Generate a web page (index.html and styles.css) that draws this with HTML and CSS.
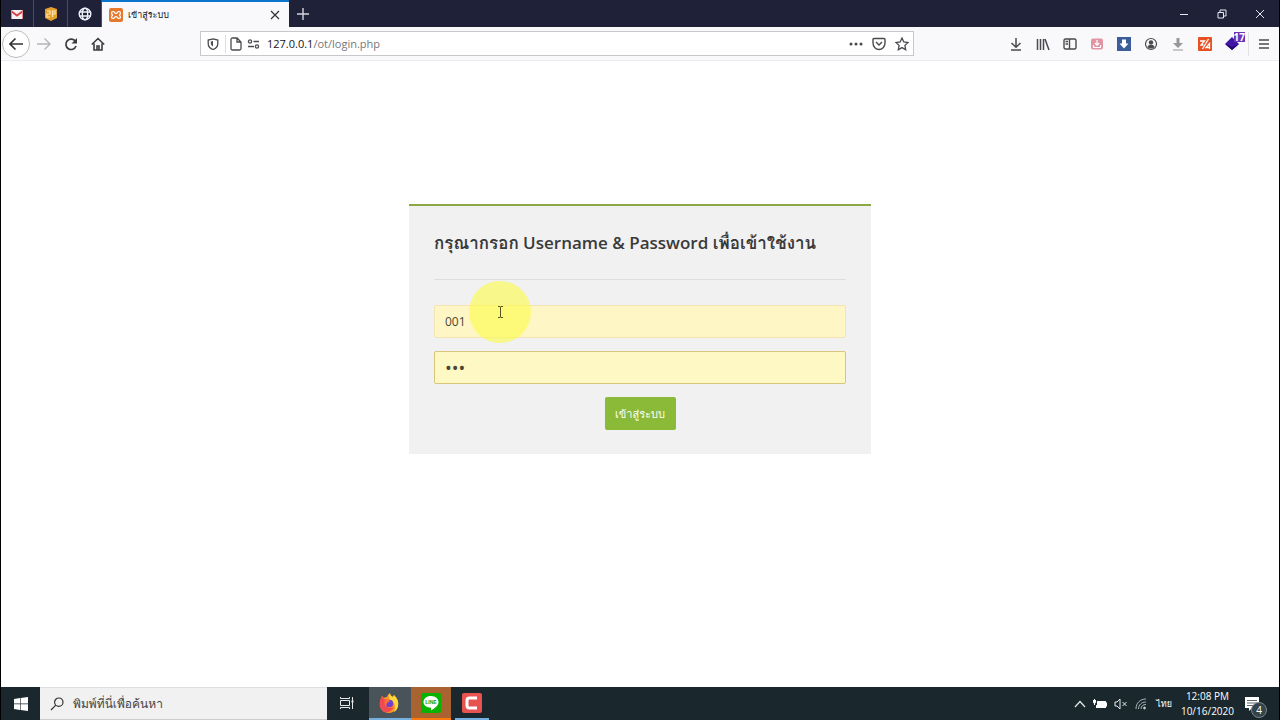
FILE: index.html
```html
<!DOCTYPE html>
<html lang="th">

<head>
    <meta charset="UTF-8">
    <meta name="viewport" content="width=device-width, initial-scale=1.0">
    <title>เข้าสู่ระบบ</title>
    <link rel="stylesheet" href="styles.css">
</head>

<body>
    <header class="browser">
        <div class="tabs">
            <button class="pin" aria-label="Gmail">
                <svg width="12" height="12" viewBox="0 0 12 12"><path fill="#f4f0f2" d="M0 2h12v9H0z"/><path fill="none" stroke="#d8434a" stroke-width="2" d="M0 3l6 4.500L12 3"/><path fill="none" stroke="#e0868b" d="M.5 2v9M11.500 2v9"/></svg>
            </button>
            <button class="pin" aria-label="phpMyAdmin">
                <svg width="14" height="14" viewBox="0 0 14 14"><path fill="#e5a02c" d="M1 2l6-2 6 2v9l-6 3-6-3z"/><path fill="none" stroke="#fbe5b0" stroke-width="1.2" d="M3 4h3v3H3v3h3M8.500 10V4H11v3H8.500"/></svg>
            </button>
            <button class="pin" aria-label="Web">
                <svg width="14" height="14" viewBox="0 0 14 14" fill="none" stroke="#eef0fa" stroke-width="1.4"><circle cx="7" cy="7" r="5.8"/><ellipse cx="7" cy="7" rx="2.7" ry="5.8"/><path d="M1 5h12M1 9h12"/></svg>
            </button>
            <div class="tab">
                <svg width="14" height="14" viewBox="0 0 14 14"><rect width="14" height="14" rx="2" fill="#e57a2e"/><path d="M4 3.5C2 3.5 2.5 6 3.5 7 2.500 8 2 10.500 4 10.500c2 0 1.500-2 3-2s1 2 3 2 1.500-2.500.5-3.500c1-1 1.500-3.500-.5-3.500s-1.500 2-3 2-1-2-3-2z" fill="none" stroke="#fff" stroke-width="1.2"/></svg>
                <span class="tab-title">เข้าสู่ระบบ</span>
                <button class="tab-close" aria-label="Close tab">
                    <svg width="10" height="10" viewBox="0 0 10 10"><path d="M1 1l8 8M9 1L1 9" stroke="#333" stroke-width="1.2"/></svg>
                </button>
            </div>
            <button class="new-tab" aria-label="New tab">
                <svg width="12" height="12" viewBox="0 0 12 12"><path d="M6 0v12M0 6h12" stroke="#d4d5df" stroke-width="1.4"/></svg>
            </button>
            <div class="window-buttons">
                <button aria-label="Minimize"><svg width="10" height="10" viewBox="0 0 10 10"><path d="M1 5.500h8" stroke="#e8e8ee"/></svg></button>
                <button aria-label="Restore"><svg width="10" height="10" viewBox="0 0 10 10" fill="none" stroke="#e8e8ee"><path d="M1 3.500h5.500V9H1zM3 3V1h6v6H7"/></svg></button>
                <button aria-label="Close"><svg width="10" height="10" viewBox="0 0 10 10"><path d="M1 1l8 8M9 1L1 9" stroke="#e8e8ee"/></svg></button>
            </div>
        </div>

        <div class="toolbar">
            <div class="nav">
                <button class="back" aria-label="Back"><svg width="14" height="14" viewBox="0 0 14 14" fill="none" stroke="#333" stroke-width="1.600"><path d="M14 7H1M6.500 1.500L1 7l5.500 5.500"/></svg></button>
                <button aria-label="Forward"><svg width="14" height="14" viewBox="0 0 14 14" fill="none" stroke="#b5b5b8" stroke-width="1.400"><path d="M0 7h13M7.500 1.500L13 7l-5.500 5.500"/></svg></button>
                <button aria-label="Reload"><svg width="14" height="14" viewBox="0 0 14 14" fill="none" stroke="#3c3c40" stroke-width="1.700"><path d="M11.500 4.500A5.200 5.200 0 1 0 12 9"/><path d="M13 1v5.500H7.500z" fill="#3c3c40" stroke="none"/></svg></button>
                <button aria-label="Home"><svg width="14" height="14" viewBox="0 0 14 14" fill="none" stroke="#3c3c40" stroke-width="1.600"><path d="M.8 7.500L7 1.500l6.200 6M3 6.500V13h8V6.500M6 13V9h2v4"/></svg></button>
            </div>
            <div class="address">
                <svg width="12" height="12" viewBox="0 0 12 12" fill="none" stroke="#4a4a4f" stroke-width="1.300"><path d="M6 .8l4.800 1.200v3.500c0 3-2 5-4.800 6-2.800-1-4.800-3-4.800-6V2z"/><path d="M6 3v5.500C4.500 7.500 3.800 6.500 3.800 5V3.500z" fill="#4a4a4f" stroke="none"/></svg>
                <span class="line"></span>
                <svg width="12" height="14" viewBox="0 0 12 14" fill="none" stroke="#4a4a4f" stroke-width="1.300"><path d="M2.500 1H7l4 4v6.500c0 1-.5 1.500-1.500 1.500h-7C1.500 13 1 12.500 1 11.500v-9C1 1.500 1.500 1 2.500 1zM7 1v4h4"/></svg>
                <svg class="perm" width="13" height="10" viewBox="0 0 13 10" fill="none" stroke="#4a4a4f" stroke-width="1.300"><circle cx="3" cy="2.500" r="1.600"/><circle cx="10" cy="7.500" r="1.600"/><path d="M6.500 2.500H12M1 7.500h6"/></svg>
                <a class="url" href="#"><b>127.0.0.1</b>/ot/login.php</a>
                <button aria-label="Page actions"><svg width="14" height="14" viewBox="0 0 14 14" fill="#4a4a4f"><circle cx="2" cy="7" r="1.500"/><circle cx="7" cy="7" r="1.500"/><circle cx="12" cy="7" r="1.500"/></svg></button>
                <button aria-label="Save to Pocket"><svg width="14" height="14" viewBox="0 0 14 14" fill="none" stroke="#4a4a4f" stroke-width="1.400"><path d="M2 1.500h10c.7 0 1 .3 1 1V6c0 4-3 6.500-6 6.500S1 10 1 6V2.500c0-.7.3-1 1-1zM4 5l3 3 3-3"/></svg></button>
                <button aria-label="Bookmark"><svg width="14" height="14" viewBox="0 0 14 14" fill="none" stroke="#4a4a4f" stroke-width="1.300"><path d="M7 1l1.800 4 4.200.5-3.100 2.900.8 4.300L7 10.600l-3.700 2.100.8-4.300L1 5.500 5.200 5z"/></svg></button>
            </div>
            <div class="tools">
                <button aria-label="Downloads"><svg width="14" height="14" viewBox="0 0 14 14" fill="none" stroke="#4a4a4f" stroke-width="1.500"><path d="M7 1v9M2.500 6L7 10.300 11.500 6M2 13h10"/></svg></button>
                <button aria-label="Library"><svg width="14" height="14" viewBox="0 0 14 14" stroke="#4a4a4f" stroke-width="1.500"><path d="M1.500 2v11M4.500 2v11M7.500 2v11M9 2l4 11"/></svg></button>
                <button aria-label="Sidebars"><svg width="14" height="14" viewBox="0 0 14 14" fill="none" stroke="#4a4a4f" stroke-width="1.400"><rect x="1" y="2" width="12" height="10" rx="1.500"/><path d="M6.500 2v10M2.500 4.500H5M2.500 7H5"/></svg></button>
                <button aria-label="Save"><svg width="14" height="14" viewBox="0 0 14 14"><rect x="1" y="1.500" width="12" height="11" rx="2" fill="#e394a3"/><path d="M7 3v5M4.800 6L7 8.200 9.200 6M3.500 8v2.500h7V8" fill="none" stroke="#fff" stroke-width="1.200"/></svg></button>
                <button aria-label="Video download"><svg width="14" height="14" viewBox="0 0 14 14"><path fill="#3b5e9b" d="M0 0h14v14H0z"/><path fill="#fff" d="M5 2.500h4v4h2.500L7 11.500 2.500 6.500H5z"/></svg></button>
                <button aria-label="Account"><svg width="14" height="14" viewBox="0 0 14 14"><circle cx="7" cy="7" r="5.500" fill="none" stroke="#4a4a4f" stroke-width="1.200"/><circle cx="7" cy="5.500" r="2.200" fill="#4a4a4f"/><path fill="#4a4a4f" d="M3.500 10C4 8 5.500 8 7 8s3 0 3.500 2c-2 2-5 2-7 0z"/></svg></button>
                <button aria-label="Download helper"><svg width="14" height="14" viewBox="0 0 14 14"><path fill="#97979a" d="M5.500 1h3v5H12l-5 5-5-5h3.500z"/><path d="M2 13h10" stroke="#97979a"/></svg></button>
                <button aria-label="Link tool"><svg width="14" height="14" viewBox="0 0 14 14"><rect width="14" height="14" rx="1" fill="#e65023"/><path d="M2 4h4.500L3 8h2.500M10.500 2L4.500 12M12 10.500H8L11.500 6.500V12" fill="none" stroke="#fff" stroke-width="1.300"/></svg></button>
                <button class="gem" aria-label="Extension"><svg width="14" height="14" viewBox="0 0 14 14"><path fill="#4014a5" d="M7 0l7 7-7 6-7-6z"/><path fill="#25086f" d="M0 7l7 3 7-3-7 6z"/></svg><span class="count">17</span></button>
                <button class="menu" aria-label="Menu"><svg width="12" height="14" viewBox="0 0 12 14" stroke="#4a4a4f" stroke-width="1.500"><path d="M1 3h10M1 7h10M1 11h10"/></svg></button>
            </div>
        </div>
    </header>

    <main class="page">
        <form class="login">
            <h1>กรุณากรอก <span>Username &amp; Password</span> เพื่อเข้าใช้งาน</h1>
            <hr>
            <input type="text" name="username" value="001" aria-label="Username">
            <input class="focus" type="password" name="password" value="001" aria-label="Password">
            <button type="button">เข้าสู่ระบบ</button>
            <span class="pointer">
                <svg width="7" height="12" viewBox="0 0 7 12"><path d="M1 .5h2l.5.5.5-.5h2M3.500 1v10M1 11.500h2l.5-.5.5.5h2" fill="none" stroke="#55551c"/></svg>
            </span>
        </form>
    </main>

    <footer class="taskbar">
        <button class="start" aria-label="Start"><svg width="14" height="14" viewBox="0 0 14 14" fill="#fff"><path d="M0 2l6-1v5.600H0zM6.600 1L14 0v6.600H6.600zM0 7.300h6V13l-6-1zM6.600 7.300H14V14l-7.400-1z"/></svg></button>
        <label class="search">
            <svg width="14" height="14" viewBox="0 0 14 14" fill="none" stroke="#333" stroke-width="1.200"><circle cx="8.800" cy="5.200" r="4.200"/><path d="M5.800 8.200L1 13"/></svg>
            <input type="text" placeholder="พิมพ์ที่นี่เพื่อค้นหา" aria-label="พิมพ์ที่นี่เพื่อค้นหา">
        </label>
        <button class="app" aria-label="Task view"><svg width="16" height="14" viewBox="0 0 16 14" fill="none" stroke="#e5e9ea"><path d="M1.500 1v1.500h9V1M1.500 13v-1.500h9V13M1.500 4.500h9v5h-9zM13.500 1v12"/><path d="M12.500 4.500h2v2h-2z" fill="#e5e9ea" stroke="none"/></svg></button>
        <button class="app firefox" aria-label="Firefox">
            <svg width="20" height="20" viewBox="0 0 20 20"><path fill="#ff9427" d="M3 3l2 2c1-1 2-1 3-1 0-2 2-3 3-4 0 2 1 3 3 4l1-2c3 3 5 6 4 10-1 5-5 8-9 8-6 0-9-4-9-9 0-3 1-6 2-8z"/><path fill="#f04a51" d="M3 3l2 3 4 1-3 3c0 4 5 6 9 4-2 4-6 6-9 5-6-2-7-10-3-16z"/><path fill="#ffd83d" d="M11 0c0 2 1 3 3 4l1-2c3 3 5 7 4 11 0 2-2 5-4 6 2-6 1-9-3-11-2-1-3-5-1-8z"/><circle cx="10.500" cy="10.500" r="3.800" fill="#7540c8"/><path fill="#f96f36" d="M6 7c2-1 4 0 5 1l-3 2c-1 1 0 3-1 3-2-2-2-4-1-6z"/></svg>
        </button>
        <button class="app line-app" aria-label="LINE">
            <svg width="20" height="20" viewBox="0 0 20 20"><rect width="20" height="20" rx="2" fill="#08b300"/><path fill="#fff" d="M10 3c4.500 0 7.500 2.800 7.500 6 0 4-4.500 6.500-7.500 8.500v-2.800c-4.500 0-7.500-2.400-7.500-5.700S5.500 3 10 3z"/><text x="10" y="11" font-family="Liberation Sans" font-size="5" font-weight="700" text-anchor="middle" fill="#08a000">LINE</text></svg>
        </button>
        <button class="app camtasia" aria-label="Camtasia">
            <svg width="20" height="20" viewBox="0 0 20 20"><rect width="20" height="20" rx="2" fill="#e65350"/><path d="M15 5H7.500C6 5 5 6 5 7.500v5C5 14 6 15 7.500 15H15" fill="none" stroke="#fff" stroke-width="3"/></svg>
        </button>
        <div class="tray">
            <svg width="12" height="12" viewBox="0 0 12 12"><path d="M1 9l5-5.500L11 9" fill="none" stroke="#e5e9ea" stroke-width="1.200"/></svg>
            <svg width="14" height="12" viewBox="0 0 14 12"><path fill="#fff" d="M4 3h9v1.500h1v4h-1V10H3V7h1zM0 2h1V1h1v1h1v2.500L2 5.500V7H1V5.500L0 4.500z"/></svg>
            <svg width="14" height="12" viewBox="0 0 14 12" fill="none" stroke="#e5e9ea"><path d="M1 4h2l3-3v10L3 8H1zM8.500 4l4 4M12.500 4l-4 4"/></svg>
            <svg width="12" height="12" viewBox="0 0 12 12" fill="none" stroke="#a9b3b7"><path d="M1 11C1 5 5 1 11 1M3.500 11c0-4 3-7 7.500-7M6 11c0-3 2-4.500 5-4.500"/><circle cx="9.500" cy="10" r="1" fill="#fff"/></svg>
            <span class="lang">ไทย</span>
            <time class="clock">12:08 PM<br>10/16/2020</time>
            <button class="notice" aria-label="Notifications"><svg width="14" height="14" viewBox="0 0 14 14"><path fill="#fff" d="M0 0h14v11H7l-3 3v-3H0z"/><path d="M2 3.500h10M2 6h10M2 8.500h6" stroke="#5c686d"/></svg><span class="badge">4</span></button>
        </div>
    </footer>
</body>

</html>
```
FILE: styles.css
```css
* {
    margin: 0;
    padding: 0;
    box-sizing: border-box;
}

body {
    display: flex;
    flex-direction: column;
    min-height: 100vh;
    border-left: 1px solid #000;
    border-right: 1px solid #000;
    font-family: "Open Sans", Loma, "Noto Sans", sans-serif;
    font-size: 11px;
    background-color: #fff;
}

button {
    display: flex;
    align-items: center;
    justify-content: center;
    border: 0;
    background: none;
    font-family: inherit;
}

svg {
    display: block;
    flex-shrink: 0;
}

.tabs {
    display: flex;
    height: 27px;
    background-color: #1f2138;
}

.pin {
    width: 34px;
    border-right: 1px solid #4b4c60;
}

.pin:first-child {
    width: 33px;
}

.tab {
    display: flex;
    align-items: center;
    width: 187px;
    padding: 0 8px 0 7px;
    border-top: 2px solid #0a74cc;
    background-color: #f9f9fb;
}

.tab-title {
    flex: 1;
    margin-left: 5px;
    font-size: 9px;
    line-height: 24px;
    color: #15141a;
}

.tab-close {
    width: 12px;
    height: 20px;
}

.new-tab {
    width: 28px;
}

.window-buttons {
    display: flex;
    margin-left: auto;
}

.window-buttons button {
    width: 38px;
}

/* address row */
.toolbar {
    display: flex;
    align-items: center;
    height: 34px;
    padding: 0 1px;
    border-bottom: 1px solid #ececef;
    background-color: #f9f9fb;
}

.nav {
    display: flex;
    flex: 0 0 198px;
    align-items: center;
}

.nav button {
    width: 27px;
    height: 28px;
}

.nav .back {
    width: 28px;
    border: 1px solid #bcbcc0;
    border-radius: 50%;
    background-color: #fff;
}

.address {
    display: flex;
    flex: 1;
    align-items: center;
    max-width: 714px;
    height: 25px;
    padding: 0 0 0 6px;
    border: 1px solid #c8c8cc;
    background-color: #fff;
}

.address .line {
    width: 1px;
    height: 18px;
    margin: 0 4px 0 6px;
    background-color: #dededf;
}

.address .perm {
    margin: 0 7px 0 5px;
}

.address button {
    width: 23px;
    height: 22px;
}

.url {
    flex: 1;
    font-size: 11px;
    color: #77777b;
    text-decoration: none;
}

.url b {
    font-weight: 400;
    color: #15141a;
}

.tools {
    display: flex;
    align-items: center;
    margin-left: auto;
}

.tools button {
    width: 27px;
    height: 24px;
}

.tools .gem {
    position: relative;
}

.count {
    position: absolute;
    top: 0;
    right: 0;
    font-size: 10px;
    font-weight: 700;
    line-height: 10px;
    color: #fff;
    background-color: #6c35b5;
}

.tools .menu {
    width: 30px;
    margin-left: 3px;
    border-left: 1px solid #e2e2e5;
}

/* login form */
.page {
    flex: 1;
    padding-top: 143px;
}

.login {
    position: relative;
    display: flex;
    flex-direction: column;
    width: 462px;
    max-width: 100%;
    margin: 0 auto;
    padding: 25px 25px 24px;
    border-top: 2px solid #8ba944;
    background-color: #f1f1f1;
}

.login h1 {
    font-size: 17px;
    font-weight: 700;
    line-height: 24px;
    white-space: nowrap;
    color: #3a3a3a;
}

.login h1 span {
    font-weight: 600;
}

.login hr {
    margin: 24px 0 25px;
    border: 0;
    border-top: 1px solid #dedede;
}

.login input {
    height: 33px;
    margin-bottom: 13px;
    padding: 0 10px;
    border: 1px solid #f5e3b3;
    border-radius: 2px;
    font-family: inherit;
    font-size: 12px;
    color: #4a4632;
    background-color: #fff6c6;
    outline: none;
}

.login .focus {
    border-color: #d8c67c;
    font-size: 18px;
    background-color: #fdf8c4;
}

.login button {
    align-self: center;
    width: 71px;
    height: 33px;
    border-radius: 2px;
    font-size: 11px;
    color: #fff;
    background-color: #8aba37;
}

.pointer {
    position: absolute;
    top: 75px;
    left: 60px;
    display: flex;
    align-items: center;
    justify-content: center;
    width: 62px;
    height: 62px;
    border-radius: 50%;
    background-color: rgba(252, 252, 70, .6);
    pointer-events: none;
}

/* taskbar */
.taskbar {
    display: flex;
    height: 33px;
    color: #fff;
    background-color: #1a282e;
}

.start {
    width: 39px;
}

.search {
    display: flex;
    align-items: center;
    width: 287px;
    padding-left: 10px;
    border-top: 1px solid #ddd;
    border-bottom: 1px solid #ccc;
    background-color: #f1f1f1;
}

.search input {
    flex: 1;
    min-width: 0;
    margin-left: 9px;
    border: 0;
    font-family: inherit;
    font-size: 12px;
    background: none;
    outline: none;
}

.search input::placeholder {
    color: #444;
}

.app {
    width: 42px;
    padding-right: 2px;
    border-bottom: 2px solid transparent;
}

.firefox {
    border-color: #76b0e0;
    background-color: #48535a;
}

.line-app {
    width: 40px;
    padding-right: 0;
    border-color: #ff7a0a;
    background-color: #a86330;
}

.camtasia {
    width: 34px;
    margin-left: 4px;
    padding-right: 0;
    border-color: #76b0e0;
}

.tray {
    display: flex;
    align-items: center;
    gap: 7px;
    margin-left: auto;
    padding-right: 12px;
}

.lang {
    margin: 0 2px;
    font-size: 9px;
}

.clock {
    font-size: 10px;
    line-height: 15px;
    text-align: center;
}

.notice {
    position: relative;
    width: 22px;
    height: 24px;
    margin-left: 4px;
    justify-content: flex-start;
}

.badge {
    position: absolute;
    right: 0;
    bottom: -2px;
    width: 16px;
    height: 16px;
    border: 1px solid #7b858a;
    border-radius: 50%;
    font-size: 10px;
    line-height: 14px;
    text-align: center;
    color: #fff;
    background-color: #35434a;
}
```
